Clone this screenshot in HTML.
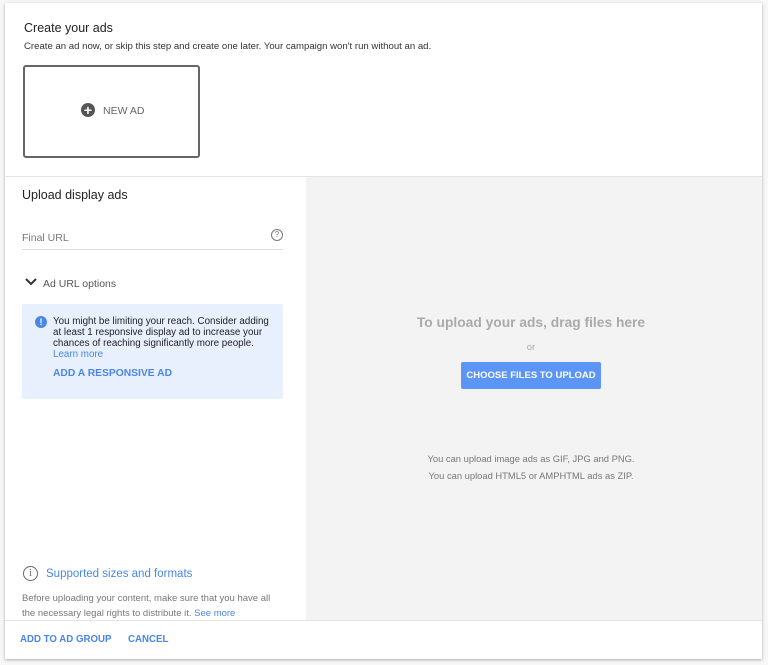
<!DOCTYPE html>
<html><head><style>
body{margin:0;width:768px;height:665px;background:#f7f7f7;font-family:"Liberation Sans",sans-serif;position:relative;overflow:hidden}
.card{position:absolute;left:5px;top:3px;width:757px;height:656px;background:#fff;box-shadow:0 1px 3px rgba(0,0,0,.3)}
.a{position:absolute;white-space:nowrap}
.blue{color:#4a86e8}
</style></head><body>
<div class="card"></div>
<div class="a" style="left:24px;top:21px;font-size:12.5px;color:#222">Create your ads</div>
<div class="a" style="left:24px;top:41px;font-size:9.6px;color:#333">Create an ad now, or skip this step and create one later. Your campaign won't run without an ad.</div>
<div class="a" style="left:23px;top:65px;width:173px;height:89px;border:2px solid #666;border-radius:3px"></div>
<div class="a" style="left:81px;top:103px;width:14px;height:14px;border-radius:50%;background:#555;color:#fff;font-size:14px;line-height:14px;text-align:center;font-weight:bold">+</div>
<div class="a" style="left:103px;top:105px;font-size:10.5px;color:#666">NEW AD</div>
<div class="a" style="left:5px;top:176px;width:757px;height:1px;background:#e4e4e4"></div>
<div class="a" style="left:306px;top:177px;width:456px;height:443px;background:#f3f3f3"></div>
<div class="a" style="left:22px;top:188px;font-size:12.5px;color:#222">Upload display ads</div>
<div class="a" style="left:22px;top:232px;font-size:10.5px;color:#777">Final URL</div>
<div class="a" style="left:271px;top:229px;width:10px;height:10px;border:1px solid #777;border-radius:50%;font-size:8px;line-height:10px;text-align:center;color:#777">?</div>
<div class="a" style="left:22px;top:249px;width:261px;height:1px;background:#ddd"></div>
<svg class="a" style="left:25px;top:277px" width="12" height="10"><path d="M1 2l5 5 5-5" stroke="#333" stroke-width="2" fill="none"/></svg>
<div class="a" style="left:43px;top:278px;font-size:10.5px;color:#555">Ad URL options</div>
<div class="a" style="left:22px;top:304px;width:261px;height:95px;background:#e8f0fe;border-radius:2px"></div>
<div class="a" style="left:35px;top:316px;width:12px;height:12px;border-radius:50%;background:#4a86e8;color:#fff;font-size:9px;line-height:12px;text-align:center;font-weight:bold">!</div>
<div class="a" style="left:53px;top:316px;font-size:9.8px;line-height:11px;color:#222">You might be limiting your reach. Consider adding<br>at least 1 responsive display ad to increase your<br>chances of reaching significantly more people.<br><span class="blue">Learn more</span></div>
<div class="a blue" style="left:53px;top:368px;font-size:10.3px;font-weight:bold">ADD A RESPONSIVE AD</div>
<div class="a" style="left:23px;top:566px;width:13px;height:13px;border:1px solid #666;border-radius:50%;font-size:10px;line-height:13px;text-align:center;color:#666;font-family:'Liberation Serif',serif">i</div>
<div class="a blue" style="left:46px;top:568px;font-size:11.5px">Supported sizes and formats</div>
<div class="a" style="left:22px;top:591px;font-size:9.5px;line-height:15px;color:#777">Before uploading your content, make sure that you have all<br>the necessary legal rights to distribute it. <span class="blue">See more</span></div>
<div class="a" style="left:5px;top:620px;width:757px;height:1px;background:#e4e4e4"></div>
<div class="a blue" style="left:20px;top:634px;font-size:9.7px;font-weight:bold">ADD TO AD GROUP</div>
<div class="a blue" style="left:128px;top:634px;font-size:9.7px;font-weight:bold">CANCEL</div>
<div class="a" style="left:306px;top:315px;width:450px;text-align:center;font-size:13.8px;font-weight:bold;color:#aaa">To upload your ads, drag files here</div>
<div class="a" style="left:306px;top:342px;width:450px;text-align:center;font-size:9.5px;color:#aaa">or</div>
<div class="a" style="left:461px;top:362px;width:140px;height:27px;background:#5b95f5;border-radius:2px;color:#fff;font-size:9.5px;font-weight:bold;line-height:27px;text-align:center">CHOOSE FILES TO UPLOAD</div>
<div class="a" style="left:306px;top:450px;width:450px;text-align:center;font-size:9.4px;line-height:17px;color:#777">You can upload image ads as GIF, JPG and PNG.<br>You can upload HTML5 or AMPHTML ads as ZIP.</div>
</body></html>
